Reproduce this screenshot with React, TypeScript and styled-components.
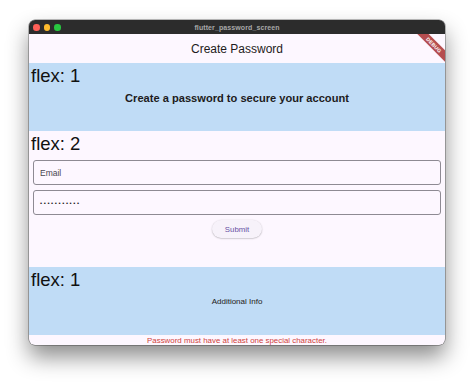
import React from "react";
import styled, { createGlobalStyle } from "styled-components";

const Global = createGlobalStyle`
  html, body { margin: 0; padding: 0; background: #ffffff; }
  body { font-family: "Liberation Sans", Arial, sans-serif; }
`;

const Page = styled.div`
  width: 474px;
  height: 384px;
  padding: 20px 0 0 29px;
  box-sizing: border-box;
`;

const Window = styled.div`
  position: relative;
  width: 416px;
  height: 325px;
  border-radius: 6px;
  overflow: hidden;
  display: flex;
  flex-direction: column;
  background: #fdf7ff;
  box-shadow: 0 12px 22px rgba(0, 0, 0, 0.45), 0 0 0 0.5px rgba(0, 0, 0, 0.5);
`;

const TitleBar = styled.div`
  height: 14px;
  flex: none;
  background: #2c2c2c;
  display: flex;
  align-items: center;
  position: relative;
  justify-content: center;
`;

const Lights = styled.div`
  position: absolute;
  left: 4px;
  top: 4px;
  display: flex;
  gap: 4px;
`;

const Light = styled.span<{ $c: string }>`
  width: 6.5px;
  height: 6.5px;
  border-radius: 50%;
  background: ${(p) => p.$c};
`;

const WinTitle = styled.span`
  font-size: 7px;
  font-weight: bold;
  color: #a8a8a8;
  letter-spacing: 0.1px;
`;

const AppBar = styled.div`
  height: 29px;
  flex: none;
  display: flex;
  align-items: center;
  justify-content: center;
  font-size: 12px;
  color: #1d1b20;
`;

const Body = styled.div`
  flex: 1;
  display: flex;
  flex-direction: column;
  min-height: 0;
`;

const Section = styled.div<{ $flex: number; $blue?: boolean }>`
  flex: ${(p) => p.$flex};
  background: ${(p) => (p.$blue ? "#c0dcf6" : "transparent")};
  display: flex;
  flex-direction: column;
  min-height: 0;
`;

const FlexLabel = styled.div`
  font-size: 18.5px;
  line-height: 20px;
  color: #111;
  padding: 3px 0 0 2px;
`;

const Centered = styled.div`
  flex: 1;
  display: flex;
  align-items: center;
  justify-content: center;
  padding-bottom: 22px;
`;

const Heading = styled.div`
  font-size: 11.1px;
  font-weight: bold;
  color: #1d1b20;
`;

const Small = styled.div`
  font-size: 8px;
  color: #1d1b20;
`;

const Form = styled.div`
  display: flex;
  flex-direction: column;
  padding: 6px 4px 0 4px;
  gap: 5px;
`;

const Field = styled.div`
  height: 25px;
  border: 1px solid #8e8a93;
  border-radius: 3px;
  box-sizing: border-box;
  display: flex;
  align-items: center;
  padding-left: 6px;
  font-size: 8.5px;
  color: #49454f;
`;

const Dots = styled.span`
  font-size: 6px;
  letter-spacing: 1.6px;
  color: #1d1b20;
`;

const ButtonRow = styled.div`
  display: flex;
  justify-content: center;
`;

const Button = styled.div`
  width: 50px;
  height: 18px;
  border-radius: 9px;
  background: #f7f2fa;
  box-shadow: 0 0.5px 1.5px rgba(0, 0, 0, 0.3);
  display: flex;
  align-items: center;
  justify-content: center;
  font-size: 7.8px;
  color: #6750a4;
`;

const ErrorText = styled.div`
  height: 10px;
  flex: none;
  display: flex;
  align-items: center;
  justify-content: center;
  font-size: 7.9px;
  color: #d03e3a;
`;

const BannerClip = styled.div`
  position: absolute;
  top: 14px;
  right: 0;
  width: 30px;
  height: 30px;
  overflow: hidden;
  pointer-events: none;
`;

const Banner = styled.div`
  position: absolute;
  top: 7px;
  right: -13px;
  width: 48px;
  height: 8px;
  transform: rotate(45deg);
  background: rgba(160, 30, 30, 0.78);
  color: #fff;
  font-size: 5px;
  font-weight: bold;
  display: flex;
  align-items: center;
  justify-content: center;
  letter-spacing: 0.3px;
`;

export default function App() {
  return (
    <>
      <Global />
      <Page>
        <Window>
          <TitleBar>
            <Lights>
              <Light $c="#fe5f57" />
              <Light $c="#febc2e" />
              <Light $c="#28c840" />
            </Lights>
            <WinTitle>flutter_password_screen</WinTitle>
          </TitleBar>
          <AppBar>Create Password</AppBar>
          <Body>
            <Section $flex={1} $blue>
              <FlexLabel>flex: 1</FlexLabel>
              <Centered>
                <Heading>Create a password to secure your account</Heading>
              </Centered>
            </Section>
            <Section $flex={2}>
              <FlexLabel>flex: 2</FlexLabel>
              <Form>
                <Field>Email</Field>
                <Field>
                  <Dots>•••••••••••</Dots>
                </Field>
                <ButtonRow>
                  <Button>Submit</Button>
                </ButtonRow>
              </Form>
            </Section>
            <Section $flex={1} $blue>
              <FlexLabel>flex: 1</FlexLabel>
              <Centered>
                <Small>Additional Info</Small>
              </Centered>
            </Section>
          </Body>
          <ErrorText>Password must have at least one special character.</ErrorText>
          <BannerClip>
            <Banner>DEBUG</Banner>
          </BannerClip>
        </Window>
      </Page>
    </>
  );
}
